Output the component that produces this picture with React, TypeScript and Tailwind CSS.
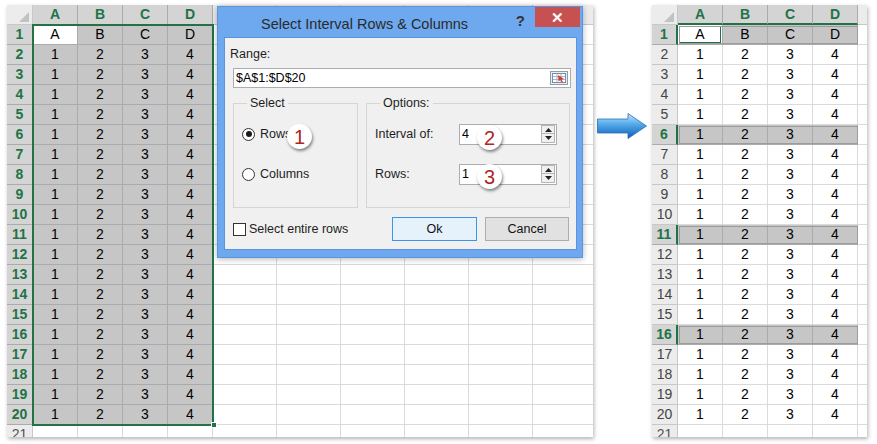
import React from "react";

const ROWS = Array.from({ length: 20 }, (_, i) => i + 1);
const COLS = ["A", "B", "C", "D"];
const VALS = ["1", "2", "3", "4"];
const MARKED = [1, 6, 11, 16];
const EXTRA = [0, 1, 2, 3, 4];

function Corner() {
  return (
    <div className="w-[26px] shrink-0 bg-[#ececec] border-r border-b border-[#c8c8c8] flex items-end justify-end pr-[3px] pb-[2px]">
      <svg width="10" height="10" viewBox="0 0 10 10">
        <path d="M10 0 V10 H0 Z" fill="#c2c2c2" />
      </svg>
    </div>
  );
}

function LeftSheet() {
  return (
    <div className="relative w-[586px] h-[432px] shrink-0 overflow-hidden bg-white shadow-[1px_2px_4px_rgba(0,0,0,0.3)] text-[14px] text-black">
      <div className="flex h-[20px]">
        <Corner />
        {COLS.map((c) => (
          <div
            key={c}
            className="w-[45px] flex items-center justify-center bg-[#d4d4d4] border-r border-b border-[#ababab] font-bold text-[#217346]"
          >
            {c}
          </div>
        ))}
        {EXTRA.map((i) => (
          <div key={i} className="w-[64px] bg-[#ececec] border-r border-b border-[#c8c8c8]" />
        ))}
        <div className="flex-1 bg-[#ececec] border-b border-[#c8c8c8]" />
      </div>

      {ROWS.map((r) => (
        <div key={r} className="flex h-[20px]">
          <div className="w-[26px] flex items-center justify-center bg-[#d4d4d4] border-r border-b border-[#ababab] font-bold text-[#217346]">
            {r}
          </div>
          {(r === 1 ? COLS : VALS).map((v, i) => (
            <div
              key={i}
              className={`w-[45px] flex items-center justify-center border-r border-b border-[#ababab] ${
                r === 1 && i === 0 ? "bg-white" : "bg-[#c6c6c6]"
              }`}
            >
              {v}
            </div>
          ))}
          {EXTRA.map((i) => (
            <div key={i} className="w-[64px] border-r border-b border-[#dadada]" />
          ))}
          <div className="flex-1 border-b border-[#dadada]" />
        </div>
      ))}

      <div className="flex h-[12px] overflow-hidden">
        <div className="w-[26px] flex justify-center bg-[#ececec] border-r border-[#c8c8c8] text-[#555] leading-[18px]">
          21
        </div>
        <div className="w-[180px] flex">
          {COLS.map((c) => (
            <div key={c} className="w-[45px] border-r border-[#dadada]" />
          ))}
        </div>
        {EXTRA.map((i) => (
          <div key={i} className="w-[64px] border-r border-[#dadada]" />
        ))}
      </div>

      {/* selection frame */}
      <div className="pointer-events-none absolute left-[25px] top-[19px] w-[182px] h-[402px] border-2 border-[#217346]" />
      <div className="pointer-events-none absolute left-[204px] top-[417px] w-[6px] h-[6px] bg-[#217346] border border-white" />
    </div>
  );
}

function RightSheet() {
  return (
    <div className="relative w-[215px] h-[432px] shrink-0 overflow-hidden bg-white shadow-[1px_2px_4px_rgba(0,0,0,0.3)] text-[14px] text-black">
      <div className="flex h-[20px]">
        <Corner />
        {COLS.map((c) => (
          <div
            key={c}
            className="w-[45px] flex items-center justify-center bg-[#d4d4d4] border-r border-r-[#ababab] border-b-2 border-b-[#217346] font-bold text-[#217346]"
          >
            {c}
          </div>
        ))}
        <div className="flex-1 bg-[#ececec] border-b border-[#c8c8c8]" />
      </div>

      {ROWS.map((r) => {
        const on = MARKED.includes(r);
        return (
          <div key={r} className="flex h-[20px]">
            {on ? (
              <div className="w-[26px] flex items-center justify-center bg-[#d4d4d4] border-r-2 border-r-[#217346] border-b border-b-[#ababab] font-bold text-[#217346]">
                {r}
              </div>
            ) : (
              <div className="w-[26px] flex items-center justify-center bg-[#ececec] border-r border-b border-[#c8c8c8] text-[#444]">
                {r}
              </div>
            )}
            {on ? (
              <div className="relative flex">
                {(r === 1 ? COLS : VALS).map((v, i) => (
                  <div
                    key={i}
                    className={`relative w-[45px] flex items-center justify-center border-r border-b border-[#ababab] ${
                      r === 1 && i === 0 ? "bg-white" : "bg-[#c6c6c6]"
                    }`}
                  >
                    {v}
                    {r === 1 && i === 0 && (
                      <div className="pointer-events-none absolute inset-[1px] border border-[#217346]" />
                    )}
                  </div>
                ))}
                <div className="pointer-events-none absolute inset-y-[1px] left-[1px] right-0 border border-[#9c9c9c]" />
              </div>
            ) : (
              VALS.map((v, i) => (
                <div
                  key={i}
                  className="w-[45px] flex items-center justify-center border-r border-b border-[#dadada]"
                >
                  {v}
                </div>
              ))
            )}
            <div className="flex-1 border-b border-[#dadada]" />
          </div>
        );
      })}

      <div className="flex h-[12px] overflow-hidden">
        <div className="w-[26px] flex justify-center bg-[#ececec] border-r border-[#c8c8c8] text-[#555] leading-[18px]">
          21
        </div>
        {COLS.map((c) => (
          <div key={c} className="w-[45px] border-r border-[#dadada]" />
        ))}
      </div>
    </div>
  );
}

function Arrow() {
  return (
    <svg width="50" height="26" viewBox="0 0 50 26" className="shrink-0 mt-[108px] ml-[4px]">
      <defs>
        <linearGradient id="arrowFill" x1="0" y1="0" x2="0" y2="1">
          <stop offset="0" stopColor="#c4e8ff" />
          <stop offset="0.4" stopColor="#5aaeea" />
          <stop offset="0.75" stopColor="#2a7fcf" />
          <stop offset="1" stopColor="#17569f" />
        </linearGradient>
      </defs>
      <path
        d="M0.5 6 H31 V0.5 L49.5 13 L31 25.5 V20 H0.5 Z"
        fill="url(#arrowFill)"
        stroke="#2b6fb9"
        strokeWidth="0.8"
      />
    </svg>
  );
}

function Radio({ checked }: { checked?: boolean }) {
  return (
    <span className="w-[13px] h-[13px] rounded-full border border-[#333] bg-white flex items-center justify-center shrink-0">
      {checked && <span className="w-[6px] h-[6px] rounded-full bg-[#1a1a1a]" />}
    </span>
  );
}

function Spin({ value }: { value: string }) {
  return (
    <div className="w-[98px] h-[21px] bg-white border border-[#abadb3] flex items-center pl-[2px] pr-[1px]">
      <span className="flex-1 text-black">{value}</span>
      <div className="w-[14px] h-[18px] flex flex-col">
        <div className="h-[9px] bg-[#f0f0f0] border border-[#b5b5b5] flex items-center justify-center">
          <svg width="7" height="4" viewBox="0 0 7 4">
            <path d="M0 4 L3.5 0 L7 4 Z" fill="#222" />
          </svg>
        </div>
        <div className="h-[9px] bg-[#f0f0f0] border border-t-0 border-[#b5b5b5] flex items-center justify-center">
          <svg width="7" height="4" viewBox="0 0 7 4">
            <path d="M0 0 L3.5 4 L7 0 Z" fill="#222" />
          </svg>
        </div>
      </div>
    </div>
  );
}

function Badge({ n, className }: { n: string; className: string }) {
  return (
    <div
      className={`pointer-events-none absolute w-[25px] h-[25px] rounded-full bg-white shadow-[1px_2px_3px_rgba(0,0,0,0.45)] flex items-center justify-center text-[20px] leading-none text-[#b3231e] ${className}`}
    >
      {n}
    </div>
  );
}

function Dialog() {
  return (
    <div className="absolute left-[217px] top-[6px] w-[366px] h-[252px] flex flex-col bg-[#6ea8ee] border border-[#5b95df] pl-[6px] pr-[5px] pb-[7px] shadow-[0_1px_6px_rgba(0,0,0,0.3)] font-['Liberation_Sans',Arial,sans-serif] text-[12.5px] text-[#1e1e1e]">
      <div className="h-[30px] flex items-start">
        <div className="pl-[37px] pt-[7px] text-[14.5px] text-[#2b2b2b]">
          Select Interval Rows &amp; Columns
        </div>
        <div className="ml-auto mr-[10px] pt-[3px] text-[15px] font-bold text-[#333]">?</div>
        <div className="w-[45px] h-[20px] -mr-[3px] bg-[#c75050] flex items-center justify-center text-white text-[15px] font-bold leading-none">
          ✕
        </div>
      </div>

      <div className="relative flex-1 flex flex-col bg-[#f0f0f0] border border-[#5d93dc] pl-[8px] pr-[5px]">
        <div className="mt-[8px] -ml-[3px] leading-[16px]">Range:</div>
        <div className="mt-[6px] h-[20px] bg-white border border-[#abadb3] flex items-center pl-[2px] pr-[2px]">
          <span className="flex-1 text-black">$A$1:$D$20</span>
          <div className="w-[18px] h-[14px] border border-[#9a9a9a] bg-[#e8eef5] flex items-center justify-center">
            <svg width="14" height="10" viewBox="0 0 14 10">
              <rect x="0.5" y="0.5" width="13" height="9" fill="#fff" stroke="#6d8fb3" />
              <path d="M0.5 3.5 H13.5 M0.5 6.5 H13.5 M5 0.5 V9.5 M9 0.5 V9.5" stroke="#8aa6c4" strokeWidth="0.8" />
              <path d="M6 2 L12 6 L9.5 6.4 L11 9 L9.8 9.6 L8.4 7 L6.6 8.6 Z" fill="#d63b2a" />
            </svg>
          </div>
        </div>

        <div className="mt-[8px] flex gap-[8px]">
          <fieldset className="w-[125px] h-[112px] border border-[#d5d5d5] pl-[8px]">
            <legend className="ml-[5px] px-[3px] leading-[14px]">Select</legend>
            <div className="mt-[14px] h-[20px] flex items-center gap-[5px]">
              <Radio checked />
              <span>Rows</span>
            </div>
            <div className="mt-[20px] h-[20px] flex items-center gap-[5px]">
              <Radio />
              <span>Columns</span>
            </div>
          </fieldset>
          <fieldset className="w-[204px] h-[112px] border border-[#d5d5d5] pl-[8px]">
            <legend className="ml-[5px] px-[3px] leading-[14px]">Options:</legend>
            <div className="mt-[14px] h-[20px] flex items-center">
              <span className="w-[84px]">Interval of:</span>
              <Spin value="4" />
            </div>
            <div className="mt-[20px] h-[20px] flex items-center">
              <span className="w-[84px]">Rows:</span>
              <Spin value="1" />
            </div>
          </fieldset>
        </div>

        <div className="mt-[9px] h-[24px] flex items-center">
          <span className="w-[13px] h-[13px] border border-[#333] bg-white" />
          <span className="ml-[3px]">Select entire rows</span>
          <div className="ml-auto mr-[2px] flex gap-[8px]">
            <button className="w-[85px] h-[24px] bg-[#e5f1fb] border border-[#3c95e8] text-[#111]">Ok</button>
            <button className="w-[84px] h-[24px] bg-[#e1e1e1] border border-[#adadad] text-[#111]">Cancel</button>
          </div>
        </div>

        <Badge n="1" className="left-[62px] top-[86px]" />
        <Badge n="2" className="left-[252px] top-[87px]" />
        <Badge n="3" className="left-[252px] top-[126px]" />
      </div>
    </div>
  );
}

export default function App() {
  return (
    <div className="relative w-[877px] h-[444px] bg-white flex items-start pl-[7px] pt-[5px] overflow-hidden font-['Liberation_Sans',Arial,sans-serif]">
      <LeftSheet />
      <Arrow />
      <div className="ml-[5px]">
        <RightSheet />
      </div>
      <Dialog />
    </div>
  );
}
